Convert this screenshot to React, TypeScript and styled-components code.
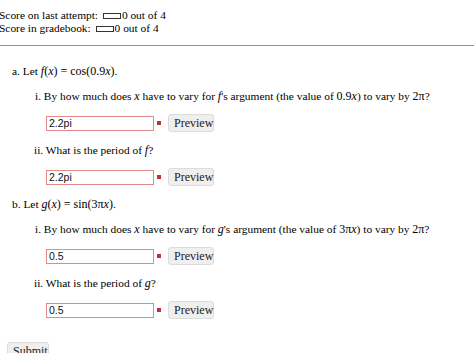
import React from 'react';
import styled, { createGlobalStyle } from 'styled-components';

const GlobalStyle = createGlobalStyle`
  * {
    margin: 0;
    padding: 0;
    box-sizing: border-box;
  }

  body {
    font-family: 'Liberation Serif', 'Times New Roman', serif;
    font-size: 11.4px;
    color: #000;
    background: #fff;
    overflow: hidden;
  }
`;

const Page = styled.div`
  width: 474px;
  height: 353px;
  padding-top: 9px;
`;

const ScoreBlock = styled.div`
  margin-left: -1px;
  line-height: 13px;
`;

const ScoreLine = styled.div`
  white-space: nowrap;
`;

const ScoreBox = styled.span`
  display: inline-block;
  width: 18px;
  height: 6px;
  border: 1px solid #333;
  margin: 0 1px 0 2px;
  vertical-align: 0px;
`;

const Rule = styled.hr`
  border: none;
  border-top: 1.5px solid #8c8cc4;
  margin-top: 10px;
`;

const Problem = styled.div`
  display: flex;
  flex-direction: column;
  gap: 11px;
  margin-top: 18px;
`;

const PartLabel = styled.div`
  line-height: 14px;
  padding-left: 12px;
  white-space: nowrap;
`;

const SubLabel = styled.div<{ $indent: number }>`
  line-height: 14px;
  padding-left: ${p => p.$indent}px;
  white-space: nowrap;
`;

const MathText = styled.span`
  font-family: 'Liberation Serif', 'Times New Roman', serif;
  font-size: 12px;
`;

const Var = styled.i`
  font-style: italic;
`;

const AnswerRow = styled.div`
  display: flex;
  align-items: center;
  height: 18px;
  padding-left: 46px;
`;

const AnswerInput = styled.div`
  width: 108px;
  height: 15px;
  border: 1px solid #e08a8a;
  font-family: 'Liberation Sans', Arial, sans-serif;
  font-size: 10.5px;
  line-height: 13px;
  padding-left: 2px;
  color: #111;
`;

const Flag = styled.span`
  display: inline-block;
  width: 4px;
  height: 4px;
  background: #c0303a;
  margin-left: 3px;
`;

const Button = styled.button`
  font-family: 'Liberation Serif', 'Times New Roman', serif;
  font-size: 12px;
  color: #222;
  background: #efefef;
  border: 1px solid #dcdcdc;
  border-radius: 3px;
  height: 18px;
  padding: 0 5px;
  line-height: 16px;
`;

const PreviewButton = styled(Button)`
  margin-left: 7px;
  width: 46px;
`;

const SubmitButton = styled(Button)`
  margin: 12px 0 0 7px;
  width: 42px;
  align-self: flex-start;
`;

const Answer: React.FC<{ value: string }> = ({ value }) => (
  <AnswerRow>
    <AnswerInput>{value}</AnswerInput>
    <Flag />
    <PreviewButton>Preview</PreviewButton>
  </AnswerRow>
);

const App: React.FC = () => (
  <Page>
    <GlobalStyle />
    <ScoreBlock>
      <ScoreLine>
        Score on last attempt: <ScoreBox />0 out of 4
      </ScoreLine>
      <ScoreLine>
        Score in gradebook: <ScoreBox />0 out of 4
      </ScoreLine>
    </ScoreBlock>
    <Rule />
    <Problem>
      <PartLabel>
        a. Let <MathText><Var>f</Var>(<Var>x</Var>) = cos(0.9<Var>x</Var>)</MathText>.
      </PartLabel>
      <SubLabel $indent={35}>
        i. By how much does <MathText><Var>x</Var></MathText> have to vary for <MathText><Var>f</Var></MathText>'s argument (the value of <MathText>0.9<Var>x</Var></MathText>) to vary by <MathText>2π</MathText>?
      </SubLabel>
      <Answer value="2.2pi" />
      <SubLabel $indent={34}>
        ii. What is the period of <MathText><Var>f</Var></MathText>?
      </SubLabel>
      <Answer value="2.2pi" />
      <PartLabel>
        b. Let <MathText><Var>g</Var>(<Var>x</Var>) = sin(3π<Var>x</Var>)</MathText>.
      </PartLabel>
      <SubLabel $indent={35}>
        i. By how much does <MathText><Var>x</Var></MathText> have to vary for <MathText><Var>g</Var></MathText>'s argument (the value of <MathText>3π<Var>x</Var></MathText>) to vary by <MathText>2π</MathText>?
      </SubLabel>
      <Answer value="0.5" />
      <SubLabel $indent={34}>
        ii. What is the period of <MathText><Var>g</Var></MathText>?
      </SubLabel>
      <Answer value="0.5" />
      <SubmitButton>Submit</SubmitButton>
    </Problem>
  </Page>
);

export default App;
